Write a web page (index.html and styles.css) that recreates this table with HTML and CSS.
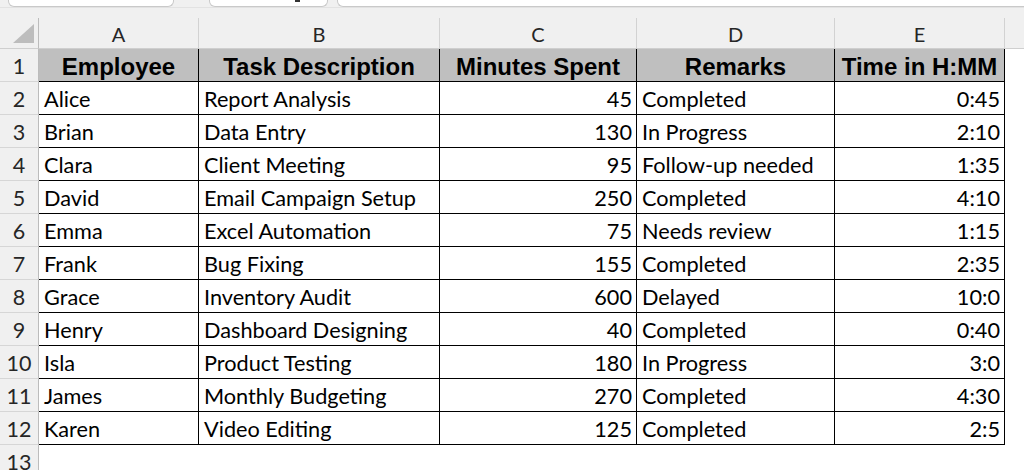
FILE: index.html
```html
<!DOCTYPE html>
<html>
<head>
<meta charset="utf-8">
<link rel="stylesheet" href="styles.css">
</head>
<body>
<div class="toolbar">
  <div class="box box-name"></div>
  <div class="box box-fn"><span class="chev"></span></div>
  <div class="box box-formula"></div>
</div>
<div class="sheet">
  <div class="corner"><span class="tri"></span></div>
  <div class="colh">A</div>
  <div class="colh">B</div>
  <div class="colh">C</div>
  <div class="colh">D</div>
  <div class="colh">E</div>
  <div class="colh colh-rest"></div>

  <div class="rowh">1</div>
  <div class="cell head">Employee</div>
  <div class="cell head">Task Description</div>
  <div class="cell head">Minutes Spent</div>
  <div class="cell head">Remarks</div>
  <div class="cell head">Time in H:MM</div>
  <div class="rest"></div>

  <div class="rowh">2</div>
  <div class="cell">Alice</div><div class="cell">Report Analysis</div><div class="cell num">45</div><div class="cell">Completed</div><div class="cell num">0:45</div><div class="rest"></div>
  <div class="rowh">3</div>
  <div class="cell">Brian</div><div class="cell">Data Entry</div><div class="cell num">130</div><div class="cell">In Progress</div><div class="cell num">2:10</div><div class="rest"></div>
  <div class="rowh">4</div>
  <div class="cell">Clara</div><div class="cell">Client Meeting</div><div class="cell num">95</div><div class="cell">Follow-up needed</div><div class="cell num">1:35</div><div class="rest"></div>
  <div class="rowh">5</div>
  <div class="cell">David</div><div class="cell">Email Campaign Setup</div><div class="cell num">250</div><div class="cell">Completed</div><div class="cell num">4:10</div><div class="rest"></div>
  <div class="rowh">6</div>
  <div class="cell">Emma</div><div class="cell">Excel Automation</div><div class="cell num">75</div><div class="cell">Needs review</div><div class="cell num">1:15</div><div class="rest"></div>
  <div class="rowh">7</div>
  <div class="cell">Frank</div><div class="cell">Bug Fixing</div><div class="cell num">155</div><div class="cell">Completed</div><div class="cell num">2:35</div><div class="rest"></div>
  <div class="rowh">8</div>
  <div class="cell">Grace</div><div class="cell">Inventory Audit</div><div class="cell num">600</div><div class="cell">Delayed</div><div class="cell num">10:0</div><div class="rest"></div>
  <div class="rowh">9</div>
  <div class="cell">Henry</div><div class="cell">Dashboard Designing</div><div class="cell num">40</div><div class="cell">Completed</div><div class="cell num">0:40</div><div class="rest"></div>
  <div class="rowh">10</div>
  <div class="cell">Isla</div><div class="cell">Product Testing</div><div class="cell num">180</div><div class="cell">In Progress</div><div class="cell num">3:0</div><div class="rest"></div>
  <div class="rowh">11</div>
  <div class="cell">James</div><div class="cell">Monthly Budgeting</div><div class="cell num">270</div><div class="cell">Completed</div><div class="cell num">4:30</div><div class="rest"></div>
  <div class="rowh">12</div>
  <div class="cell">Karen</div><div class="cell">Video Editing</div><div class="cell num">125</div><div class="cell">Completed</div><div class="cell num">2:5</div><div class="rest"></div>
  <div class="rowh">13</div>
  <div class="empty"></div><div class="empty"></div><div class="empty"></div><div class="empty"></div><div class="empty"></div><div class="rest"></div>
</div>
</body>
</html>
```

FILE: styles.css
```css
* { box-sizing: border-box; }
html, body {
  margin: 0;
  padding: 0;
  background: #ffffff;
  overflow: hidden;
}
body {
  font-family: "Lato", "Open Sans", sans-serif;
  color: #000;
}
.toolbar {
  height: 18px;
  background: #f0f0f0;
  display: flex;
  align-items: flex-start;
  position: relative;
}
.toolbar::after {
  content: "";
  position: absolute;
  left: 0;
  right: 0;
  top: 7px;
  height: 1px;
  background: #e2e2e2;
}
.box {
  height: 7px;
  background: #fff;
  border: 1px solid #c9c9c9;
  border-top: none;
  border-radius: 0 0 6px 6px;
  position: relative;
  z-index: 1;
}
.box-name { margin-left: 8px; width: 166px; }
.box-fn {
  margin-left: 35px;
  width: 119px;
  display: flex;
  justify-content: flex-end;
  padding-right: 27px;
}
.chev {
  width: 5px;
  height: 2px;
  background: #333;
}
.box-formula {
  margin-left: 9px;
  flex: 1;
  border-right: none;
  border-radius: 0 0 0 6px;
}
.sheet {
  display: grid;
  grid-template-columns: 39px 160px 241px 197px 198px 170px 1fr;
  grid-template-rows: 31px repeat(13, 33px);
}
.corner {
  background: #f0f0f0;
  border-right: 1px solid #bcbcbc;
  border-bottom: 1px solid #cfcfcf;
  position: relative;
}
.tri {
  position: absolute;
  right: 4px;
  bottom: 5px;
  width: 0;
  height: 0;
  border-style: solid;
  border-width: 0 0 19px 21px;
  border-color: transparent transparent #bdbdbd transparent;
}
.colh {
  background: #f0f0f0;
  border-right: 1px solid #d2d2d2;
  border-bottom: 1px solid #cfcfcf;
  display: flex;
  align-items: center;
  justify-content: center;
  padding-top: 2px;
  font-size: 20px;
  color: #262626;
}
.colh-rest { border-right: none; }
.rowh {
  background: #f0f0f0;
  border-right: 1px solid #bcbcbc;
  border-bottom: 1px solid #d6d6d6;
  display: flex;
  align-items: center;
  justify-content: center;
  padding-top: 2px;
  font-size: 21.5px;
  color: #262626;
}
.cell {
  border-right: 1px solid #000;
  border-bottom: 1px solid #000;
  display: flex;
  align-items: center;
  padding: 2px 5px 0 5px;
  font-size: 21.7px;
  white-space: nowrap;
  overflow: hidden;
}
.num {
  justify-content: flex-end;
  padding-right: 4px;
}
.head {
  background: #bfbfbf;
  justify-content: center;
  font-family: "Liberation Sans", Arial, sans-serif;
  font-weight: bold;
  font-size: 24px;
  padding: 3px 0 0 0;
}
.rest, .empty { background: #fff; }
```
